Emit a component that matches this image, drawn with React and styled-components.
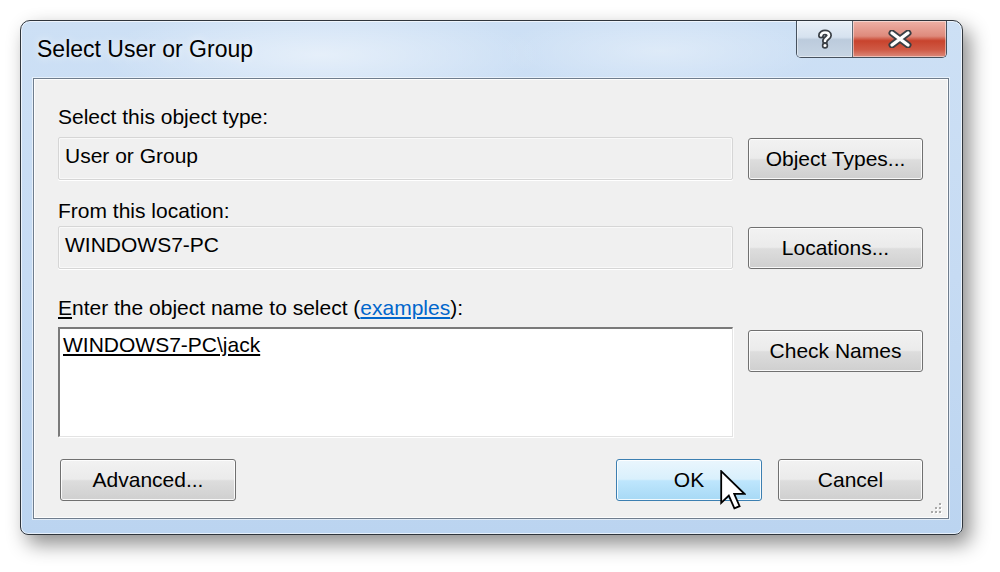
import React from 'react';
import styled, { createGlobalStyle } from 'styled-components';

const GlobalStyle = createGlobalStyle`
  html, body {
    margin: 0;
    background: #ffffff;
  }
  body {
    font-family: "Liberation Sans", Arial, sans-serif;
    font-size: 21px;
    color: #000;
  }
`;

const Stage = styled.div`
  width: 1000px;
  height: 572px;
  padding: 20px 0 0 20px;
  box-sizing: border-box;
`;

const Frame = styled.div`
  position: relative;
  box-sizing: border-box;
  width: 943px;
  height: 515px;
  display: flex;
  flex-direction: column;
  padding: 0 13px 15px 12px;
  border: 1px solid #2f353c;
  border-radius: 10px 10px 8px 8px;
  background:
    radial-gradient(ellipse 220px 50px at 300px 34px, rgba(255, 255, 255, 0.5), rgba(255, 255, 255, 0)),
    radial-gradient(ellipse 160px 40px at 640px 30px, rgba(255, 255, 255, 0.35), rgba(255, 255, 255, 0)),
    linear-gradient(180deg, #cde0f5 0%, #c6dbf3 50%, #bbd4f0 100%);
  box-shadow:
    inset 0 0 0 1px rgba(255, 255, 255, 0.65),
    7px 9px 20px rgba(0, 0, 0, 0.45);
`;

const TitleBar = styled.div`
  height: 57px;
  display: flex;
  align-items: flex-start;
`;

const Title = styled.div`
  margin: 15px 0 0 4px;
  font-size: 23px;
  line-height: 26px;
  color: #000;
  text-shadow: 0 0 8px rgba(255, 255, 255, 0.9);
`;

const Caption = styled.div`
  margin-left: auto;
  margin-right: 2px;
  display: flex;
  height: 36px;
  border: 1px solid #46515e;
  border-top: none;
  border-radius: 0 0 5px 5px;
  overflow: hidden;
`;

const CaptionButton = styled.div`
  width: ${(p) => p.$w}px;
  display: flex;
  align-items: center;
  justify-content: center;
  box-shadow: inset 0 0 0 1px rgba(255, 255, 255, 0.45);
  background: ${(p) =>
    p.$close
      ? 'linear-gradient(180deg, #eeb1a6 0%, #de8a7c 42%, #c8432d 55%, #cf5a45 80%, #dc8a7c 100%)'
      : 'linear-gradient(180deg, #e8eff7 0%, #d6e2ef 45%, #bccbdc 52%, #c7d5e4 100%)'};
  & + & {
    border-left: 1px solid #5d6772;
  }
`;

const Client = styled.div`
  position: relative;
  flex: 1;
  display: flex;
  flex-direction: column;
  padding: 0 25px 0 24px;
  background: #f0f0f0;
  border: 1px solid #6f7d8d;
  box-shadow:
    inset 0 0 0 1px #fdfdfd,
    0 0 0 1px rgba(255, 255, 255, 0.55);
`;

const Label = styled.div`
  margin-top: ${(p) => p.$mt}px;
  height: 24px;
  line-height: 24px;
  white-space: nowrap;
`;

const Accel = styled.span`
  text-decoration: underline;
`;

const Link = styled.span`
  color: #0066cc;
  text-decoration: underline;
`;

const Row = styled.div`
  margin-top: ${(p) => p.$mt}px;
  display: grid;
  grid-template-columns: 675px 175px;
  column-gap: 15px;
  align-items: ${(p) => p.$align || 'end'};
`;

const Field = styled.div`
  box-sizing: border-box;
  height: 43px;
  padding: 6px 0 0 6px;
  line-height: 24px;
  background: #f0f0f0;
  border: 1px solid #d6d6d6;
  border-radius: 2px;
  box-shadow: inset 0 0 0 1px #f9f9f9, 0 1px 0 #ffffff;
`;

const TextBox = styled.div`
  box-sizing: border-box;
  height: 110px;
  padding: 4px 0 0 3px;
  line-height: 24px;
  background: #ffffff;
  border-top: 2px solid #7a7a7a;
  border-left: 2px solid #7a7a7a;
  border-right: 1px solid #e3e3e3;
  border-bottom: 1px solid #e3e3e3;
  box-shadow: 1px 1px 0 #ffffff;
`;

const Entry = styled.span`
  text-decoration: underline;
`;

const Button = styled.div`
  box-sizing: border-box;
  width: ${(p) => p.$w || 175}px;
  height: 42px;
  margin-top: ${(p) => p.$mt || 0}px;
  display: flex;
  align-items: center;
  justify-content: center;
  line-height: 24px;
  border: 1px solid ${(p) => (p.$hot ? '#3c7fb1' : '#707070')};
  border-radius: 3px;
  box-shadow: inset 0 0 0 1px rgba(255, 255, 255, 0.85);
  background: ${(p) =>
    p.$hot
      ? 'linear-gradient(180deg, #eaf6fd 0%, #d9f0fc 48%, #bee6fd 52%, #a7d9f5 100%)'
      : 'linear-gradient(180deg, #f2f2f2 0%, #ebebeb 48%, #dddddd 52%, #cfcfcf 100%)'};
`;

const Footer = styled.div`
  margin-top: 22px;
  display: flex;
  align-items: center;
  padding-left: 2px;
`;

const FooterRight = styled.div`
  margin-left: auto;
  display: flex;
  gap: 16px;
`;

const Grip = styled.svg`
  position: absolute;
  right: 4px;
  bottom: 2px;
`;

const Pointer = styled.svg`
  position: absolute;
  left: 699px;
  top: 449px;
`;

function HelpGlyph() {
  return (
    <svg width="16" height="20" viewBox="0 0 16 20">
      <g fill="none" strokeLinecap="round" strokeLinejoin="round">
        <path d="M4 6.5 C4 2.5 12 2.5 12 6.5 C12 9 8 9 8 12" stroke="#3a3f45" strokeWidth="6" />
        <path d="M4 6.5 C4 2.5 12 2.5 12 6.5 C12 9 8 9 8 12" stroke="#ffffff" strokeWidth="2.6" />
        <circle cx="8" cy="16.5" r="2.4" fill="#ffffff" stroke="#3a3f45" strokeWidth="1.6" />
      </g>
    </svg>
  );
}

function CloseGlyph() {
  return (
    <svg width="26" height="18" viewBox="0 0 26 18">
      <g strokeLinecap="round">
        <path d="M5 3 L21 15 M21 3 L5 15" stroke="#3b3f44" strokeWidth="7" />
        <path d="M5 3 L21 15 M21 3 L5 15" stroke="#ffffff" strokeWidth="3.4" />
      </g>
    </svg>
  );
}

function SizeGrip() {
  const dots = [
    [11, 1],
    [7, 5],
    [11, 5],
    [3, 9],
    [7, 9],
    [11, 9],
  ];
  return (
    <Grip width="16" height="14" viewBox="0 0 16 14">
      {dots.map(([x, y]) => (
        <g key={`${x}-${y}`}>
          <rect x={x + 1} y={y + 1} width="2" height="2" fill="#ffffff" />
          <rect x={x} y={y} width="2" height="2" fill="#a9a9a9" />
        </g>
      ))}
    </Grip>
  );
}

function Cursor() {
  return (
    <Pointer width="26" height="40" viewBox="0 0 13 20">
      <path
        d="M0.6 0.6 L0.6 16.4 L4.4 12.8 L7.2 19.2 L9.8 18.1 L7.1 11.9 L12.2 11.9 Z"
        fill="#ffffff"
        stroke="#000000"
        strokeWidth="0.9"
        strokeLinejoin="miter"
      />
    </Pointer>
  );
}

export default function App() {
  return (
    <Stage>
      <GlobalStyle />
      <Frame>
        <TitleBar>
          <Title>Select User or Group</Title>
          <Caption>
            <CaptionButton $w={55}>
              <HelpGlyph />
            </CaptionButton>
            <CaptionButton $w={93} $close>
              <CloseGlyph />
            </CaptionButton>
          </Caption>
        </TitleBar>
        <Client>
          <Label $mt={26}>Select this object type:</Label>
          <Row $mt={8}>
            <Field>User or Group</Field>
            <Button>Object Types...</Button>
          </Row>
          <Label $mt={19}>From this location:</Label>
          <Row $mt={3}>
            <Field>WINDOWS7-PC</Field>
            <Button>Locations...</Button>
          </Row>
          <Label $mt={27}>
            <Accel>E</Accel>nter the object name to select (<Link>examples</Link>):
          </Label>
          <Row $mt={7} $align="start">
            <TextBox>
              <Entry>WINDOWS7-PC\jack</Entry>
            </TextBox>
            <Button $mt={3}>Check Names</Button>
          </Row>
          <Footer>
            <Button $w={176}>Advanced...</Button>
            <FooterRight>
              <Button $w={146} $hot>
                OK
              </Button>
              <Button $w={145}>Cancel</Button>
            </FooterRight>
          </Footer>
          <SizeGrip />
        </Client>
        <Cursor />
      </Frame>
    </Stage>
  );
}
